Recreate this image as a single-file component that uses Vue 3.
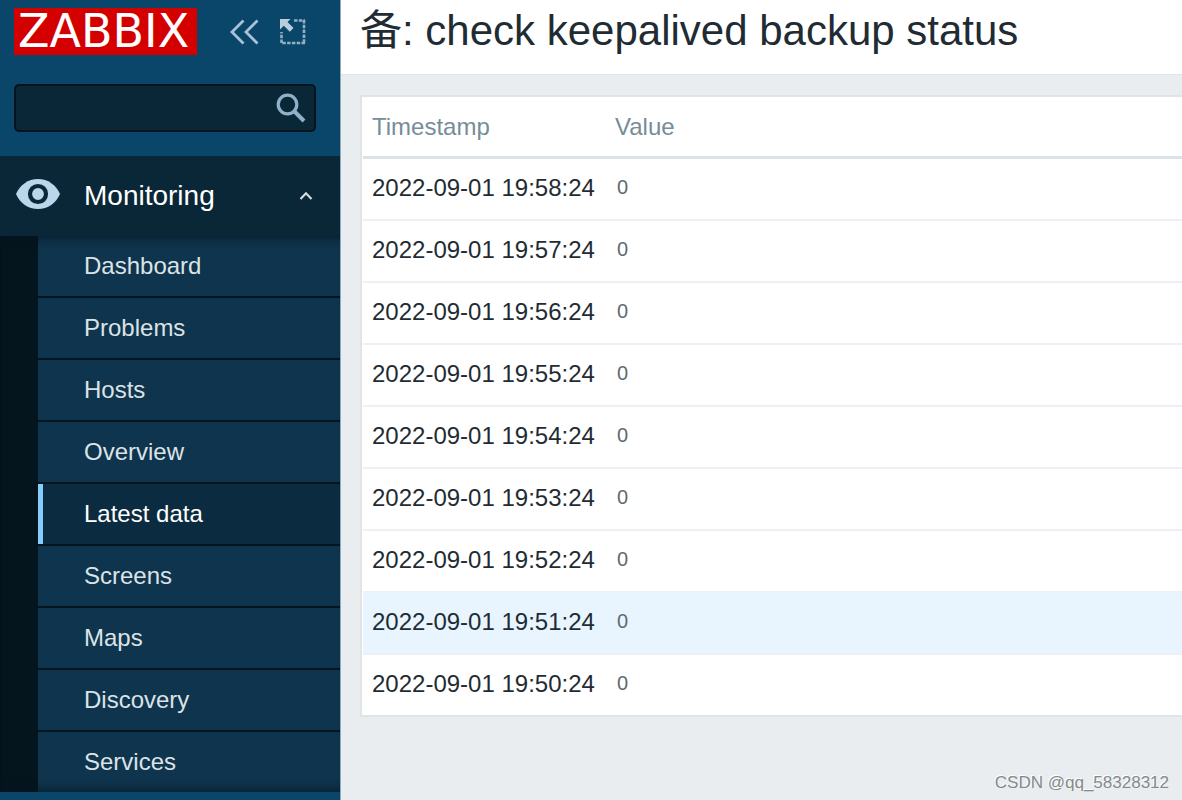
<template>
  <div class="layout">
    <!-- 侧边栏 -->
    <aside class="sidebar">
      <div class="sidebar__header">
        <a class="logo" href="#">ZABBIX</a>
        <button class="icon-button" type="button" aria-label="Collapse sidebar">
          <svg width="30" height="26" viewBox="0 0 30 26" fill="none" stroke="#a9c3d5" stroke-width="2.8">
            <path d="M14.500 1.500 3 13l11.500 11.500M28.500 1.500 17 13l11.500 11.500" />
          </svg>
        </button>
        <button class="icon-button icon-button--kiosk" type="button" aria-label="Hide sidebar">
          <svg width="26" height="26" viewBox="0 0 26 26">
            <path d="M0 0h10.500L7.500 3l6 6-3.700 3.700-6-6L0 10.500z" fill="#b8cedd" />
            <path d="M14 1.500h11M24 1v23M25 24H1M1.500 24V13" fill="none" stroke="#8fb0c5" stroke-width="2.600" stroke-dasharray="3.500 1.300" />
          </svg>
        </button>
      </div>

      <form class="search" role="search" @submit.prevent>
        <input v-model="keyword" class="search__input" type="text" aria-label="Search" />
        <button class="search__button" type="submit" aria-label="Search">
          <svg width="30" height="30" viewBox="0 0 30 30" fill="none" stroke="#8fb0c8">
            <circle cx="11.500" cy="11.500" r="9.300" stroke-width="3.200" />
            <path d="M18.500 18.500 28 28" stroke-width="4" />
          </svg>
        </button>
      </form>

      <nav class="menu">
        <button class="menu__title" type="button" :aria-expanded="expanded" @click="expanded = !expanded">
          <svg class="menu__eye" width="44" height="32" viewBox="0 0 44 32">
            <path d="M22 1C12 1 4 7 0 16c4 9 12 15 22 15s18-6 22-15C40 7 32 1 22 1z" fill="#b9d6ea" />
            <circle cx="22" cy="16" r="8" fill="#b9d6ea" stroke="#0a2737" stroke-width="4.200" />
          </svg>
          <span class="menu__label">Monitoring</span>
          <svg width="14" height="10" viewBox="0 0 14 10" fill="none" stroke="#d5dde2" stroke-width="2.200">
            <path d="M1.500 8 7 2.300 12.500 8" />
          </svg>
        </button>
        <ul v-show="expanded" class="submenu">
          <li v-for="item in menuItems" :key="item">
            <a
              class="submenu__link"
              :class="{ 'submenu__link--active': item === current }"
              href="#"
              @click.prevent="current = item"
            >{{ item }}</a>
          </li>
        </ul>
      </nav>
    </aside>

    <!-- 主内容 -->
    <main class="content">
      <header class="content__header">
        <h1>备: check keepalived backup status</h1>
      </header>
      <div class="panel">
        <table class="history">
          <thead>
            <tr>
              <th class="history__time" scope="col">Timestamp</th>
              <th scope="col">Value</th>
            </tr>
          </thead>
          <tbody>
            <tr v-for="row in rows" :key="row.time" :class="{ 'is-hovered': row.hovered }">
              <td>{{ row.time }}</td>
              <td><pre>{{ row.value }}</pre></td>
            </tr>
          </tbody>
        </table>
      </div>
    </main>

    <div class="watermark">CSDN @qq_58328312</div>
  </div>
</template>

<script setup>
import { ref } from 'vue'

const keyword = ref('')
const expanded = ref(true)
const current = ref('Latest data')

// 二级菜单
const menuItems = [
  'Dashboard',
  'Problems',
  'Hosts',
  'Overview',
  'Latest data',
  'Screens',
  'Maps',
  'Discovery',
  'Services'
]

// 历史数据
const rows = [
  { time: '2022-09-01 19:58:24', value: 0 },
  { time: '2022-09-01 19:57:24', value: 0 },
  { time: '2022-09-01 19:56:24', value: 0 },
  { time: '2022-09-01 19:55:24', value: 0 },
  { time: '2022-09-01 19:54:24', value: 0 },
  { time: '2022-09-01 19:53:24', value: 0 },
  { time: '2022-09-01 19:52:24', value: 0 },
  { time: '2022-09-01 19:51:24', value: 0, hovered: true },
  { time: '2022-09-01 19:50:24', value: 0 }
]
</script>

<style>
body {
  margin: 0;
  background: #e9edf0;
}
</style>

<style scoped>
.layout {
  position: relative;
  display: flex;
  min-height: 100vh;
  overflow: hidden;
  font-family: "Liberation Sans", "Noto Sans CJK SC", sans-serif;
  font-size: 24px;
  color: #1f2c33;
}

button {
  padding: 0;
  border: 0;
  background: none;
  font: inherit;
  cursor: pointer;
}

svg {
  display: block;
}

.sidebar {
  flex: 0 0 340px;
  min-width: 0;
  border-right: 1px solid #8fabbd;
  background: #0a466a;
}

.sidebar__header {
  display: flex;
  align-items: center;
  padding: 8px 14px 0;
}

.logo {
  box-sizing: border-box;
  width: 183px;
  height: 47px;
  padding-left: 4px;
  background: #d40000;
  color: #fff;
  font-family: "DejaVu Sans", sans-serif;
  font-size: 46px;
  line-height: 47px;
  text-decoration: none;
}

.icon-button {
  margin-left: 32px;
}

.icon-button--kiosk {
  margin-left: 21px;
}

.search {
  display: flex;
  align-items: center;
  box-sizing: border-box;
  height: 48px;
  margin: 29px 24px 24px 14px;
  padding-right: 8px;
  border: 2px solid #04141d;
  border-radius: 5px;
  background: #0a2737;
}

.search__input {
  flex: 1;
  width: 100%;
  min-width: 0;
  height: 40px;
  padding: 0 10px;
  border: 0;
  outline: none;
  background: transparent;
  color: #fff;
  font: inherit;
}

.menu__title {
  display: flex;
  align-items: center;
  width: 100%;
  height: 80px;
  padding: 0 27px 0 16px;
  background: #0a2737;
  color: #fff;
  font-size: 28px;
  text-align: left;
}

.menu__eye {
  margin-bottom: 5px;
}

.menu__label {
  flex: 1;
  padding-left: 24px;
}

.submenu {
  display: grid;
  gap: 2px;
  position: relative;
  margin: 0;
  padding: 0 0 0 38px;
  background: #04151e;
  list-style: none;
}

/* 上下边缘的内阴影 */
.submenu::after {
  content: "";
  position: absolute;
  inset: 0;
  box-shadow: inset 0 12px 12px -12px #04151e, inset 0 -12px 12px -12px #04151e;
  pointer-events: none;
}

.submenu__link {
  display: block;
  padding-left: 46px;
  background: #0f344d;
  color: #dce3e7;
  line-height: 60px;
  text-decoration: none;
}

.submenu__link--active {
  padding-left: 41px;
  border-left: 5px solid #85cdfb;
  background: #0b2c40;
  color: #fff;
}

.content {
  flex: 1;
  min-width: 0;
}

.content__header {
  padding: 6px 19px 19px;
  border-bottom: 1px solid #dfe4e7;
  background: #fff;
}

h1 {
  margin: 0;
  font-size: 42px;
  font-weight: normal;
  line-height: 49px;
  white-space: nowrap;
}

.panel {
  margin: 20px 0 0 19px;
  padding-left: 1px;
  border: 2px solid #dfe4e7;
  border-right: 0;
  background: #fff;
}

.history {
  width: 100%;
  border-collapse: separate;
  border-spacing: 0;
}

.history th,
.history td {
  box-sizing: border-box;
  height: 62px;
  padding: 0 9px 2px;
  border-bottom: 2px solid #eef1f3;
  text-align: left;
}

.history th {
  border-bottom: 3px solid #dce2e7;
  padding-bottom: 0;
  color: #768d99;
  font-weight: normal;
}

.history .history__time {
  width: 243px;
}

.history tr:last-child td {
  height: 60px;
  border-bottom: 0;
}

.history tr:first-child th {
  border-bottom: 3px solid #dce2e7;
  height: 62px;
}

.history .is-hovered td {
  background: #e8f5ff;
}

.history pre {
  margin: 0;
  padding: 0 2px 2px;
  color: #5f6a70;
  font-family: "Liberation Sans", sans-serif;
  font-size: 20px;
}

.watermark {
  position: absolute;
  right: 13px;
  bottom: 7px;
  color: #85898c;
  font-size: 17px;
  line-height: 20px;
  text-shadow: -1px -1px 0 #fff;
}
</style>
